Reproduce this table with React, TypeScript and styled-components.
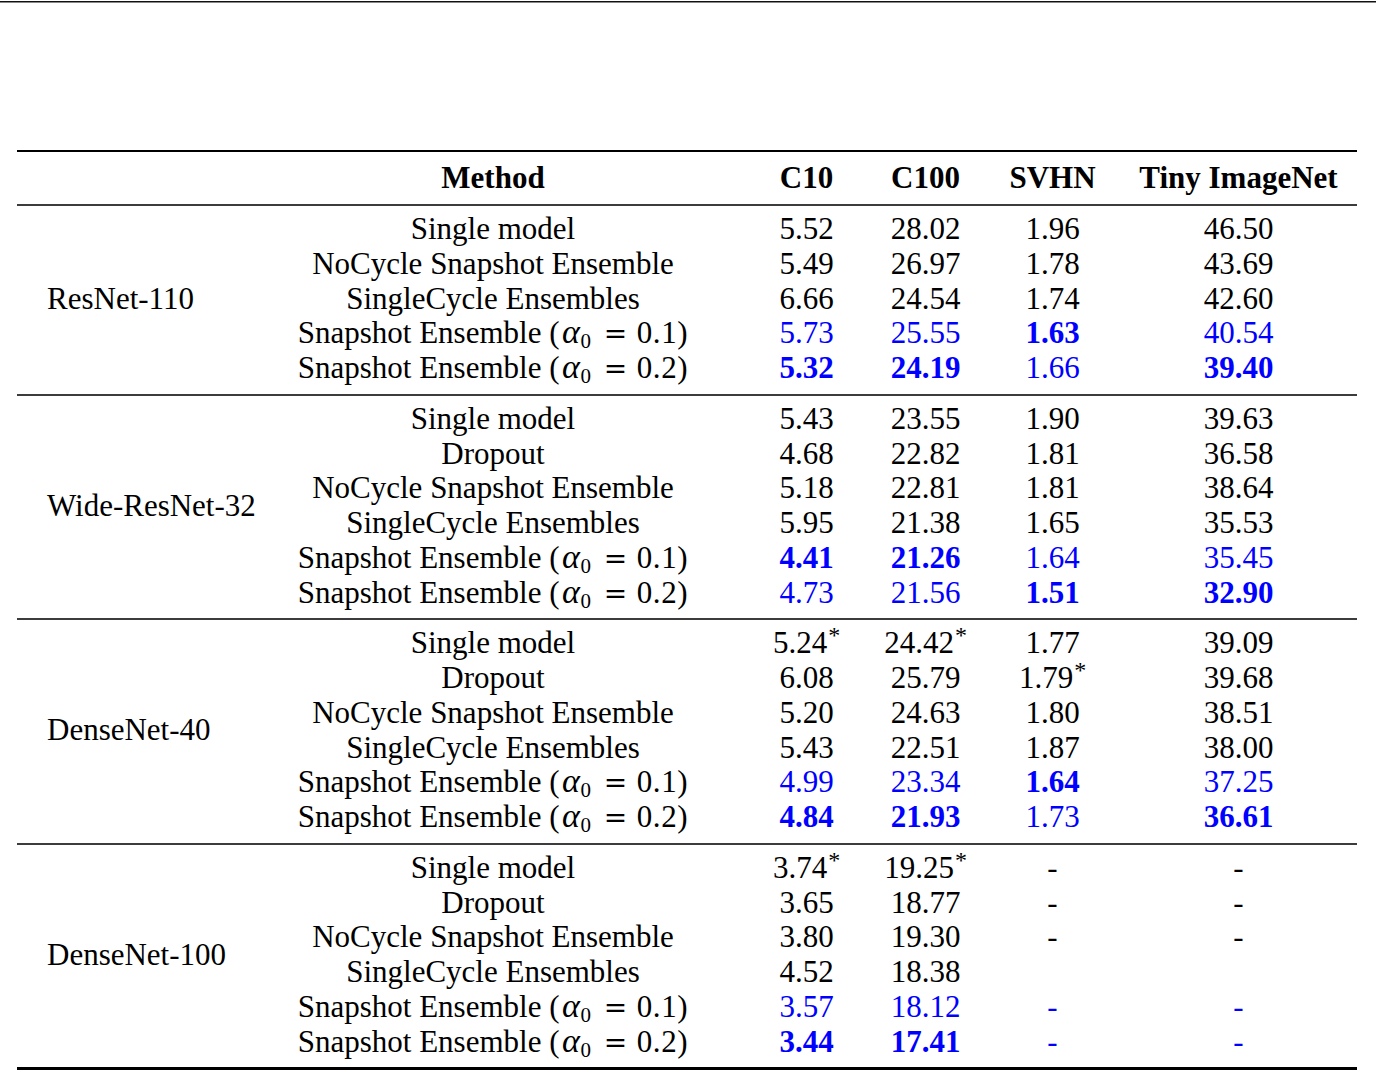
import React from "react";
import styled, { createGlobalStyle } from "styled-components";

const GlobalStyle = createGlobalStyle`
  html, body {
    margin: 0;
    padding: 0;
    background: #ffffff;
  }
  body {
    font-family: "Liberation Serif", "Times New Roman", serif;
    color: #000;
  }
`;

type Tone = "plain" | "blue" | "best";
type Val = { v: string; t?: Tone; star?: boolean };
type Row = { method: React.ReactNode; vals: Val[] };
type Group = { name: string; rows: Row[] };

const COLS = "222px 508px 119px 119px 135px 237px";

const Page = styled.div`
  width: 1376px;
  display: flex;
  flex-direction: column;
`;

const TopLine = styled.div`
  margin-top: 1px;
  height: 2px;
  background: linear-gradient(#111 50%, #888 50%);
`;

const Table = styled.div`
  margin: 147px 0 0 17px;
  width: 1340px;
  display: flex;
  flex-direction: column;
  border-top: 2px solid #000;
`;

const HeaderRow = styled.div`
  display: grid;
  grid-template-columns: ${COLS};
  height: 52px;
  align-items: center;
  border-bottom: 2px solid #3c3c3c;
`;

const HeadCell = styled.div`
  font-weight: bold;
  font-size: 31px;
  text-align: center;
  white-space: nowrap;
`;

const GroupBlock = styled.div<{ $last?: boolean }>`
  display: grid;
  grid-template-columns: ${COLS};
  grid-auto-rows: 34.75px;
  padding: 6px 0 8px 0;
  border-bottom: ${(p) => (p.$last ? "3px solid #000" : "2px solid #3c3c3c")};
`;

const GroupLabel = styled.div<{ $span: number }>`
  grid-column: 1;
  grid-row: 1 / span ${(p) => p.$span};
  align-self: center;
  padding-left: 30px;
  font-size: 31px;
  line-height: 34.75px;
  white-space: nowrap;
`;

const MethodCell = styled.div`
  grid-column: 2;
  text-align: center;
  font-size: 31px;
  line-height: 34.75px;
  white-space: nowrap;
`;

const ValueCell = styled.div<{ $tone: Tone }>`
  text-align: center;
  font-size: 31px;
  line-height: 34.75px;
  white-space: nowrap;
  color: ${(p) => (p.$tone === "plain" ? "#000" : "#0000ff")};
  font-weight: ${(p) => (p.$tone === "best" ? "bold" : "normal")};
`;

const Star = styled.sup`
  font-size: 24px;
  line-height: 0;
  vertical-align: 10px;
  margin-left: 1px;
`;

const Math = styled.span`
  letter-spacing: 0.6px;
`;

const Alpha = styled.span`
  font-style: italic;
  font-size: 34px;
  line-height: 0;
  margin-left: 2px;
`;

const Sub = styled.sub`
  font-size: 21px;
  line-height: 0;
  vertical-align: -5px;
`;

const Eq = styled.span`
  font-family: "DejaVu Serif", serif;
  font-size: 28px;
  line-height: 0;
  margin: 0 9px 0 12px;
`;

const Snapshot = ({ a }: { a: string }) => (
  <>
    Snapshot Ensemble{" "}
    <Math>
      (<Alpha>α</Alpha>
      <Sub>0</Sub>
      <Eq>=</Eq>
      {a})
    </Math>
  </>
);

const p = (v: string, star?: boolean): Val => ({ v, t: "plain", star });
const b = (v: string): Val => ({ v, t: "blue" });
const B = (v: string): Val => ({ v, t: "best" });

const groups: Group[] = [
  {
    name: "ResNet-110",
    rows: [
      { method: "Single model", vals: [p("5.52"), p("28.02"), p("1.96"), p("46.50")] },
      { method: "NoCycle Snapshot Ensemble", vals: [p("5.49"), p("26.97"), p("1.78"), p("43.69")] },
      { method: "SingleCycle Ensembles", vals: [p("6.66"), p("24.54"), p("1.74"), p("42.60")] },
      { method: <Snapshot a="0.1" />, vals: [b("5.73"), b("25.55"), B("1.63"), b("40.54")] },
      { method: <Snapshot a="0.2" />, vals: [B("5.32"), B("24.19"), b("1.66"), B("39.40")] },
    ],
  },
  {
    name: "Wide-ResNet-32",
    rows: [
      { method: "Single model", vals: [p("5.43"), p("23.55"), p("1.90"), p("39.63")] },
      { method: "Dropout", vals: [p("4.68"), p("22.82"), p("1.81"), p("36.58")] },
      { method: "NoCycle Snapshot Ensemble", vals: [p("5.18"), p("22.81"), p("1.81"), p("38.64")] },
      { method: "SingleCycle Ensembles", vals: [p("5.95"), p("21.38"), p("1.65"), p("35.53")] },
      { method: <Snapshot a="0.1" />, vals: [B("4.41"), B("21.26"), b("1.64"), b("35.45")] },
      { method: <Snapshot a="0.2" />, vals: [b("4.73"), b("21.56"), B("1.51"), B("32.90")] },
    ],
  },
  {
    name: "DenseNet-40",
    rows: [
      { method: "Single model", vals: [p("5.24", true), p("24.42", true), p("1.77"), p("39.09")] },
      { method: "Dropout", vals: [p("6.08"), p("25.79"), p("1.79", true), p("39.68")] },
      { method: "NoCycle Snapshot Ensemble", vals: [p("5.20"), p("24.63"), p("1.80"), p("38.51")] },
      { method: "SingleCycle Ensembles", vals: [p("5.43"), p("22.51"), p("1.87"), p("38.00")] },
      { method: <Snapshot a="0.1" />, vals: [b("4.99"), b("23.34"), B("1.64"), b("37.25")] },
      { method: <Snapshot a="0.2" />, vals: [B("4.84"), B("21.93"), b("1.73"), B("36.61")] },
    ],
  },
  {
    name: "DenseNet-100",
    rows: [
      { method: "Single model", vals: [p("3.74", true), p("19.25", true), p("-"), p("-")] },
      { method: "Dropout", vals: [p("3.65"), p("18.77"), p("-"), p("-")] },
      { method: "NoCycle Snapshot Ensemble", vals: [p("3.80"), p("19.30"), p("-"), p("-")] },
      { method: "SingleCycle Ensembles", vals: [p("4.52"), p("18.38"), p(""), p("")] },
      { method: <Snapshot a="0.1" />, vals: [b("3.57"), b("18.12"), b("-"), b("-")] },
      { method: <Snapshot a="0.2" />, vals: [B("3.44"), B("17.41"), b("-"), b("-")] },
    ],
  },
];

export default function App() {
  return (
    <Page>
      <GlobalStyle />
      <TopLine />
      <Table>
        <HeaderRow>
          <HeadCell />
          <HeadCell>Method</HeadCell>
          <HeadCell>C10</HeadCell>
          <HeadCell>C100</HeadCell>
          <HeadCell>SVHN</HeadCell>
          <HeadCell>Tiny ImageNet</HeadCell>
        </HeaderRow>
        {groups.map((g, gi) => (
          <GroupBlock key={g.name} $last={gi === groups.length - 1}>
            <GroupLabel $span={g.rows.length}>{g.name}</GroupLabel>
            {g.rows.map((r, ri) => (
              <React.Fragment key={ri}>
                <MethodCell style={{ gridRow: ri + 1 }}>{r.method}</MethodCell>
                {r.vals.map((v, vi) => (
                  <ValueCell key={vi} $tone={v.t ?? "plain"} style={{ gridRow: ri + 1, gridColumn: vi + 3 }}>
                    {v.v}
                    {v.star && <Star>*</Star>}
                  </ValueCell>
                ))}
              </React.Fragment>
            ))}
          </GroupBlock>
        ))}
      </Table>
    </Page>
  );
}
